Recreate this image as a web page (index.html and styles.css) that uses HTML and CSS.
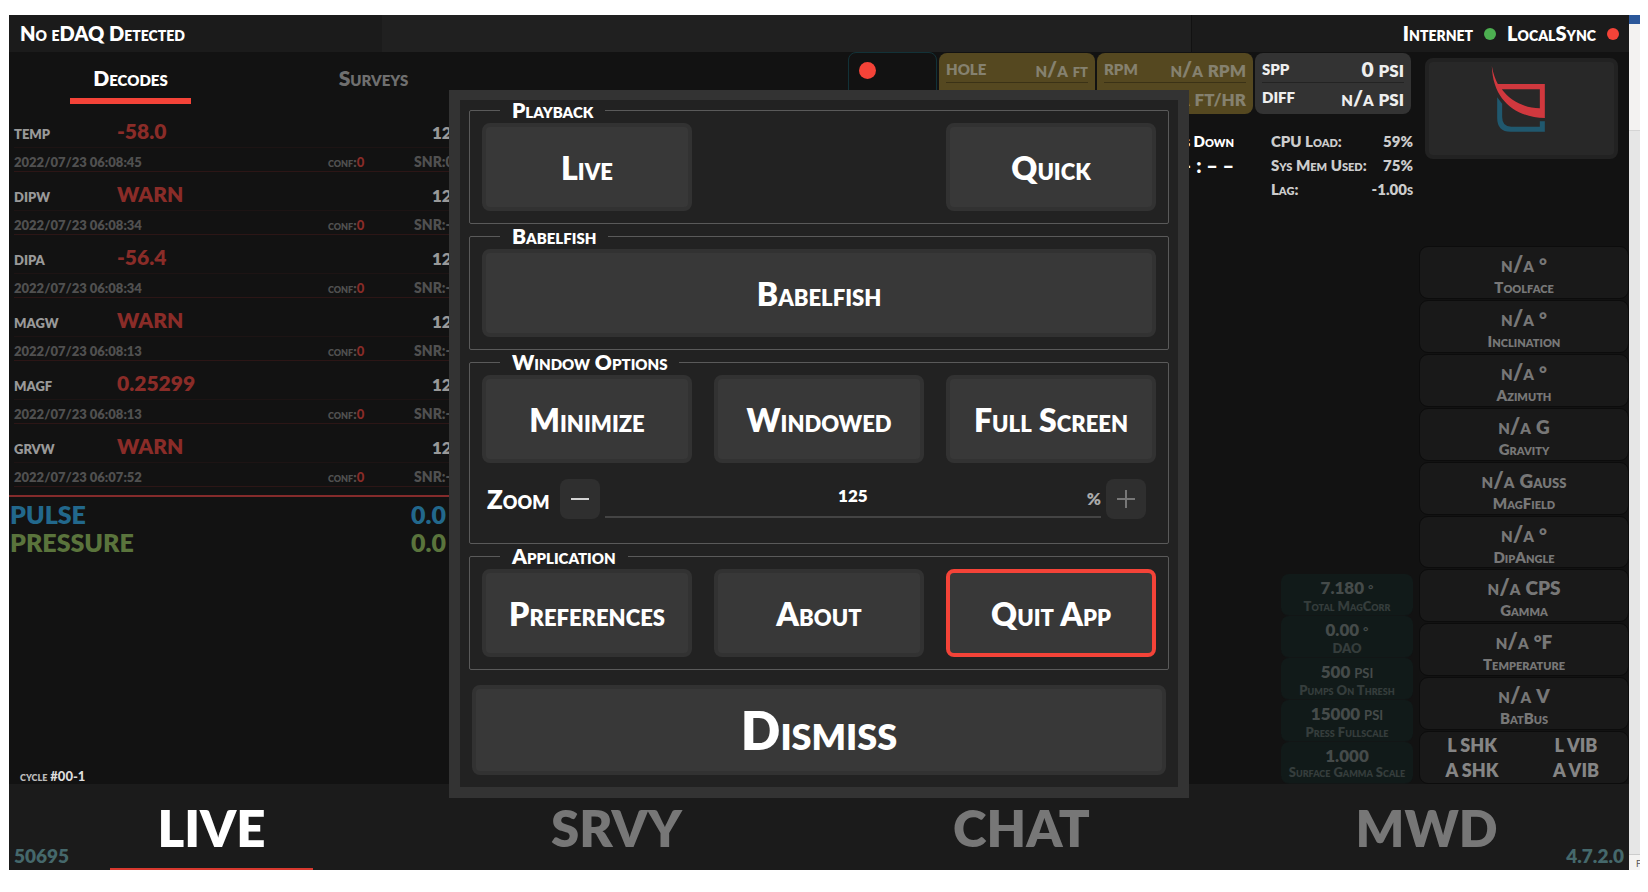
FILE: index.html
```html
<!DOCTYPE html>
<html lang="en">
<head>
  <meta charset="UTF-8" /><meta name="viewport" content="width=device-width,initial-scale=1"/>
  <title>MWD Decoder</title>
  <link rel="stylesheet" href="styles.css">
</head>
<body>

  <div class="app">

    <!-- Status bar -->
    <header class="topbar">
      <div class="status">No eDAQ Detected</div>
      <div class="topbar-mid"></div>
      <div class="links">
        <span>Internet</span><i class="dot green"></i>
        <span>LocalSync</span><i class="dot red"></i>
      </div>
    </header>

    <main class="main">

      <!-- Decodes list -->
      <section class="decodes">
        <nav class="tabs">
          <a href="#decodes" class="tab active">Decodes</a>
          <a href="#surveys" class="tab">Surveys</a>
        </nav>
        <div class="rows">
          <div class="row">
            <div class="row-top"><span class="name">TEMP</span><span class="val">-58.0</span><span class="num">12</span></div>
            <div class="row-sub"><span class="date">2022/07/23 06:08:45</span><span class="conf">conf:<b>0</b></span><span class="snr">SNR:0</span></div>
          </div>
          <div class="row">
            <div class="row-top"><span class="name">DIPW</span><span class="val">WARN</span><span class="num">12</span></div>
            <div class="row-sub"><span class="date">2022/07/23 06:08:34</span><span class="conf">conf:<b>0</b></span><span class="snr">SNR:-</span></div>
          </div>
          <div class="row">
            <div class="row-top"><span class="name">DIPA</span><span class="val">-56.4</span><span class="num">12</span></div>
            <div class="row-sub"><span class="date">2022/07/23 06:08:34</span><span class="conf">conf:<b>0</b></span><span class="snr">SNR:-</span></div>
          </div>
          <div class="row">
            <div class="row-top"><span class="name">MAGW</span><span class="val">WARN</span><span class="num">12</span></div>
            <div class="row-sub"><span class="date">2022/07/23 06:08:13</span><span class="conf">conf:<b>0</b></span><span class="snr">SNR:-</span></div>
          </div>
          <div class="row">
            <div class="row-top"><span class="name">MAGF</span><span class="val">0.25299</span><span class="num">12</span></div>
            <div class="row-sub"><span class="date">2022/07/23 06:08:13</span><span class="conf">conf:<b>0</b></span><span class="snr">SNR:-</span></div>
          </div>
          <div class="row">
            <div class="row-top"><span class="name">GRVW</span><span class="val">WARN</span><span class="num">12</span></div>
            <div class="row-sub"><span class="date">2022/07/23 06:07:52</span><span class="conf">conf:<b>0</b></span><span class="snr">SNR:-</span></div>
          </div>
        </div>
        <div class="traces">
          <div class="trace pulse"><span>PULSE</span><span>0.0</span></div>
          <div class="trace pressure"><span>PRESSURE</span><span>0.0</span></div>
        </div>
        <div class="cycle">cycle <b>#00-1</b></div>
      </section>

      <!-- Gauges and system stats -->
      <section class="center">
        <div class="gauges">
          <div class="rec"><i class="dot rec-dot"></i></div>
          <div class="gauge stale">
            <div class="g-row"><span>HOLE</span><span class="g-val">n/a <small>FT</small></span></div>
            <div class="g-row"><span>BIT</span><span class="g-val">n/a <small>FT</small></span></div>
          </div>
          <div class="gauge stale">
            <div class="g-row"><span>RPM</span><span class="g-val">n/a <em>RPM</em></span></div>
            <div class="g-row"><span>ROP</span><span class="g-val">n/a <em>FT/HR</em></span></div>
          </div>
          <div class="gauge">
            <div class="g-row"><span>SPP</span><span class="g-val">0 <em>PSI</em></span></div>
            <div class="g-row"><span>DIFF</span><span class="g-val">n/a <em>PSI</em></span></div>
          </div>
        </div>
        <div class="sys">
          <div class="pumps">
            <div>Pumps Down</div>
            <div class="timer">– – : – –</div>
          </div>
          <div class="stats">
            <div><span>CPU Load:</span><span>59%</span></div>
            <div><span>Sys Mem Used:</span><span>75%</span></div>
            <div><span>Lag:</span><span>-1.00s</span></div>
          </div>
        </div>
        <div class="config">
          <div class="cfg"><div class="cfg-val">7.180 <small>°</small></div><div>Total MagCorr</div></div>
          <div class="cfg"><div class="cfg-val">0.00 <small>°</small></div><div>DAO</div></div>
          <div class="cfg"><div class="cfg-val">500 <small>PSI</small></div><div>Pumps On Thresh</div></div>
          <div class="cfg"><div class="cfg-val">15000 <small>PSI</small></div><div>Press Fullscale</div></div>
          <div class="cfg"><div class="cfg-val">1.000</div><div>Surface Gamma Scale</div></div>
        </div>
      </section>

      <!-- Sensor column -->
      <aside class="side">
        <button class="logo" aria-label="Menu">
          <svg viewBox="934 199 182 198" width="61" height="66">
            <path fill="#d0383e" fill-rule="evenodd" d="M936 199C940 222 947 240 954 253H1095V355C1010 353 939 304 936 199ZM966 269C990 303 1032 325 1080 326V269Z"/>
            <path fill="#20586e" d="M952 293L967 312V352Q967 381 994 381H1080V365H1095V396H992Q952 396 952 354Z"/>
          </svg>
        </button>
        <div class="sensors">
          <div class="sensor"><div class="s-val">n/a <em>°</em></div><div>Toolface</div></div>
          <div class="sensor"><div class="s-val">n/a <em>°</em></div><div>Inclination</div></div>
          <div class="sensor"><div class="s-val">n/a <em>°</em></div><div>Azimuth</div></div>
          <div class="sensor"><div class="s-val">n/a <em>G</em></div><div>Gravity</div></div>
          <div class="sensor"><div class="s-val">n/a <em>Gauss</em></div><div>MagField</div></div>
          <div class="sensor"><div class="s-val">n/a <em>°</em></div><div>DipAngle</div></div>
          <div class="sensor"><div class="s-val">n/a <em>CPS</em></div><div>Gamma</div></div>
          <div class="sensor"><div class="s-val">n/a <em>°F</em></div><div>Temperature</div></div>
          <div class="sensor"><div class="s-val">n/a <em>V</em></div><div>BatBus</div></div>
          <div class="sensor shocks"><span>L SHK</span><span>L VIB</span><span>A SHK</span><span>A VIB</span></div>
        </div>
      </aside>
    </main>

    <!-- Bottom nav -->
    <nav class="bottom">
      <a href="#live" class="nav active">LIVE</a>
      <a href="#srvy" class="nav">SRVY</a>
      <a href="#chat" class="nav">CHAT</a>
      <a href="#mwd" class="nav">MWD</a>
      <span class="build">50695</span>
      <span class="version">4.7.2.0</span>
    </nav>

    <!-- App menu -->
    <div class="overlay">
      <div class="menu" role="dialog" aria-label="Menu">
        <fieldset class="group">
          <legend>Playback</legend>
          <div class="btns">
            <button class="btn">Live</button>
            <button class="btn last">Quick</button>
          </div>
        </fieldset>
        <fieldset class="group">
          <legend>Babelfish</legend>
          <div class="btns">
            <button class="btn wide">Babelfish</button>
          </div>
        </fieldset>
        <fieldset class="group">
          <legend>Window Options</legend>
          <div class="btns">
            <button class="btn">Minimize</button>
            <button class="btn">Windowed</button>
            <button class="btn">Full Screen</button>
          </div>
          <div class="zoom">
            <label for="zoom">Zoom</label>
            <button class="step" aria-label="Zoom out">
              <svg width="18" height="18" viewBox="0 0 18 18"><path d="M0 9H18" stroke="#d4d4d4" stroke-width="2"/></svg>
            </button>
            <div class="field">
              <input id="zoom" type="text" value="125">
              <span>%</span>
            </div>
            <button class="step" aria-label="Zoom in" disabled>
              <svg width="18" height="18" viewBox="0 0 18 18"><path d="M0 9H18M9 0V18" stroke="#777" stroke-width="2"/></svg>
            </button>
          </div>
        </fieldset>
        <fieldset class="group">
          <legend>Application</legend>
          <div class="btns">
            <button class="btn">Preferences</button>
            <button class="btn">About</button>
            <button class="btn quit">Quit App</button>
          </div>
        </fieldset>
        <button class="btn dismiss">Dismiss</button>
      </div>
    </div>
  </div>

  <!-- Edge of the window behind -->
  <div class="behind">
    <div class="b-title"></div>
    <div class="b-ribbon"></div>
    <div class="b-page"></div>
    <div class="b-status">F</div>
  </div>

</body>
</html>
```

FILE: styles.css
```css
* { box-sizing: border-box; }
body { margin: 0; padding: 15px 8px 22px 9px; min-height: 100vh; display: flex; background: #fff; color: #fff; font-family: Lato, "Open Sans", sans-serif; font-weight: 800; font-variant-caps: small-caps; }
a { color: inherit; text-decoration: none; }
button, input { font: inherit; color: inherit; }
button { cursor: pointer; }
em, small { font-style: normal; }

.app { position: relative; flex: 1; display: flex; flex-direction: column; background: #121212; overflow: hidden; }
.dot { width: 12px; height: 12px; border-radius: 50%; background: #f44338; }
.dot.green { background: #4caf50; }

/* status bar */
.topbar { display: grid; grid-template-columns: 23% 50% 27%; height: 37px; background: #1b1b1b; font-size: 20px; line-height: 37px; }
.topbar-mid { background: #202020; border-right: 1px solid #121212; }
.status { padding-left: 11px; }
.links { display: flex; justify-content: flex-end; align-items: center; gap: 11px; padding-right: 10px; }

.main { flex: 1; display: flex; }

/* decodes */
.decodes { width: 30%; display: flex; flex-direction: column; }
.tabs { display: flex; height: 52px; margin-bottom: 5px; }
.tab { flex: 1; display: flex; flex-direction: column; align-items: center; font-size: 21px; line-height: 46px; height: 52px; color: #6f6f6f; padding-top: 3px; }
.tab.active { color: #fff; }
.tab.active::after { content: ""; width: 50%; height: 6px; background: #f44338; margin-top: -3px; }
.rows { padding-left: 5px; }
.row { border-bottom: 1px solid #2c1616; }
.row-top, .row-sub { display: grid; align-items: baseline; }
.row-top { grid-template-columns: 103px 1fr 63px; height: 39px; line-height: 43px; border-bottom: 1px solid #1d1414; color: #999; }
.row-sub { grid-template-columns: 314px 1fr 81px; height: 23px; line-height: 27px; font-size: 13px; color: #505050; }
.name { font-size: 13px; }
.val { font-size: 21px; color: #8a2c28; }
.num { font-size: 17px; }
.snr { font-size: 14px; }
.conf b { color: #8a2c28; }
.traces { margin-top: 8px; border-top: 2px solid #842b2b; }
.trace { display: grid; grid-template-columns: 1fr 84px; padding-left: 1px; font-size: 25px; line-height: 28px; padding-top: 3px; height: 28px; }
.pulse { color: #22688c; }
.pressure { color: #5a743c; }
.cycle { margin-top: auto; padding-left: 11px; font-size: 13px; line-height: 16px; color: #bbb; }
.cycle b { color: #ddd; }

/* gauges */
.center { flex: 1; display: flex; flex-direction: column; align-items: flex-end; padding-right: 6px; }
.gauges { display: flex; gap: 2px; padding-right: 2px; }
.rec { width: 89px; height: 61px; padding: 9px 10px; border: 1px solid #123238; border-radius: 8px; }
.rec-dot { display: block; width: 17px; height: 17px; }
.gauge { width: 156px; height: 61px; margin-top: 1px; padding: 2px 7px; border-radius: 8px; background: #333; color: #eee; font-size: 15px; }
.gauge.stale { background: #554820; color: #85816f; }
.g-row { display: flex; justify-content: space-between; align-items: center; height: 28px; }
.g-row:first-child { border-bottom: 1px solid rgba(0, 0, 0, .3); }
.g-val { font-size: 21px; }
.g-val em { font-size: 17px; }
.g-val small { font-size: 13px; }
.sys { display: flex; gap: 37px; padding: 15px 0 0; font-size: 15px; line-height: 24px; }
.pumps { text-align: right; }
.timer { font-size: 20px; }
.stats { width: 142px; color: #ccc; }
.stats div { display: flex; justify-content: space-between; }

/* config tiles */
.config { width: 132px; margin-top: auto; }
.cfg { height: 42px; padding-top: 4px; border-radius: 8px; background: #111a19; border-bottom: 1px solid #121616; color: #353d3c; text-align: center; font-size: 13px; line-height: 14px; white-space: nowrap; }
.cfg-val { font-size: 17px; line-height: 19px; color: #454b4a; }
.cfg-val small { font-size: 13px; font-weight: 700; }

/* sensors */
.side { width: 210px; display: flex; flex-direction: column; }
.logo { width: 193px; height: 101px; margin: 6px 0 0 6px; padding: 4px 0 0; display: flex; justify-content: center; align-items: flex-start; background: #282828; border: 4px solid #222; border-radius: 8px; }
.sensors { margin-top: auto; height: 538px; display: grid; grid-template-rows: repeat(10, minmax(0, 1fr)); gap: 1px; }
.sensor { background: #191919; border: 1px solid #0c0c0c; border-radius: 9px; color: #777; text-align: center; font-size: 15px; line-height: 20px; padding-top: 4px; }
.s-val { font-size: 22px; line-height: 25px; }
.s-val em { font-size: 19px; }
.shocks { display: grid; grid-template-columns: 1fr 1fr; align-items: center; padding: 0; font-size: 18px; color: #858585; }

/* bottom nav */
.bottom { position: relative; display: flex; height: 86px; background: #1b1b1b; }
.nav { flex: 1; display: flex; flex-direction: column; align-items: center; justify-content: space-between; font-size: 51px; line-height: 84px; padding-top: 2px; color: #777; }
.nav.active { color: #fff; }
.nav.active::after { content: ""; width: 50%; height: 2px; background: #d8392f; margin-top: -2px; }
.build, .version { position: absolute; bottom: 4px; font-size: 19px; line-height: 20px; color: #45686b; }
.build { left: 5px; }
.version { right: 5px; }

/* menu */
.overlay { position: absolute; inset: 0; display: flex; justify-content: center; align-items: flex-start; padding-top: 75px; }
.menu { width: 90%; max-width: 740px; background: #222; border: solid #333; border-width: 10px 11px 11px; padding: 0 9px 12px; display: flex; flex-direction: column; gap: 2px; }
.group { margin: 0; padding: 3px 12px 12px; border: 1px solid #5a5a5a; border-radius: 2px; min-width: 0; }
.group legend { margin-left: 18px; padding: 0 12px; font-size: 21px; line-height: 20px; background: #222; }
.btns { display: grid; grid-template-columns: repeat(3, 1fr); gap: 22px; }
.btn { height: 88px; padding: 0; background: #383838; border: 4px solid #323232; border-radius: 8px; font-size: 32px; }
.btn.last { grid-column: 3; }
.btn.wide { grid-column: 1 / 4; }
.btn.quit { border-color: #f44338; }
.btn.dismiss { height: 90px; margin: 13px 3px 0; font-size: 52px; }
.zoom { display: flex; align-items: center; padding: 16px 10px 12px 5px; font-size: 26px; }
.zoom label { margin-right: auto; }
.step { width: 40px; height: 40px; padding: 0; display: flex; justify-content: center; align-items: center; background: #2f2f2f; border: 0; border-radius: 8px; }
.field { display: flex; align-items: center; width: 496px; height: 38px; margin: 0 5px; border-bottom: 2px solid #444; font-size: 17px; color: #aaa; }
.field input { flex: 1; min-width: 0; padding: 0 0 6px 14px; background: none; border: 0; outline: 0; color: #fff; text-align: center; }

/* window behind */
.behind { width: 11px; display: flex; flex-direction: column; background: #e6e6e6; }
.b-title { height: 9px; background: #2b579a; }
.b-ribbon { height: 107px; background: #f3f2f1; border-bottom: 1px solid #d5d5d5; }
.b-page { flex: 1; }
.b-status { height: 16px; padding-left: 7px; overflow: hidden; background: #f3f2f1; border-top: 1px solid #ccc; color: #555; font-size: 9px; font-weight: 400; line-height: 18px; }
```
